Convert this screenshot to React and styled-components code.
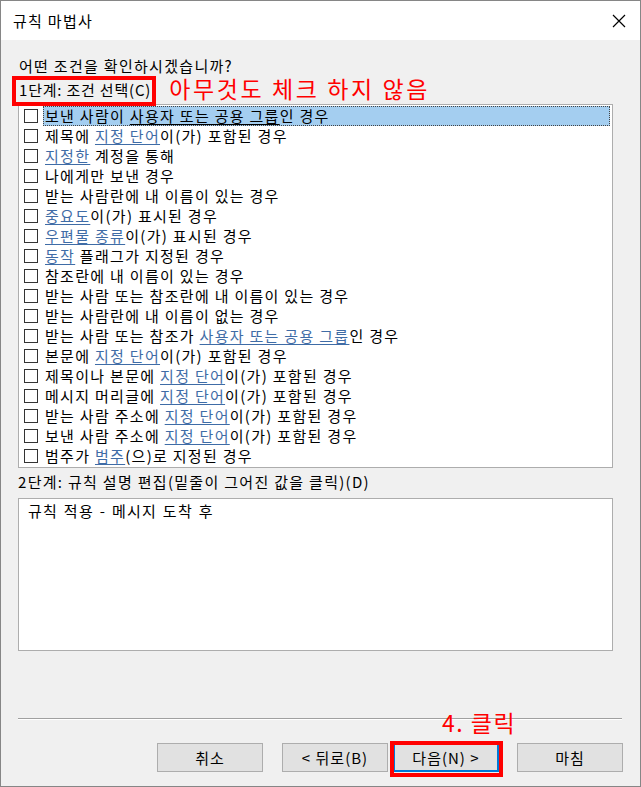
import React from 'react';
import styled, { createGlobalStyle } from 'styled-components';

const GlobalStyle = createGlobalStyle`
    html, body {
        margin: 0;
        padding: 0;
        background: #f0f0f0;
    }
    * {
        box-sizing: border-box;
    }
`;

const FONT = `"Noto Sans CJK KR", "Noto Sans", sans-serif`;

const Window = styled.div`
    width: 641px;
    height: 787px;
    border: 1px solid #868686;
    background: #f0f0f0;
    font-family: ${FONT};
    font-size: 15px;
    letter-spacing: 1.3px;
    color: #000;
    display: flex;
    flex-direction: column;
    overflow: hidden;
`;

const TitleBar = styled.div`
    height: 39px;
    flex: none;
    background: #fff;
    display: flex;
    align-items: center;
    justify-content: space-between;
    padding: 0 14px 0 12px;
    font-size: 15px;
`;

const Body = styled.div`
    padding: 16px 27px 0 17px;
    display: flex;
    flex-direction: column;
`;

const Line = styled.div`
    height: 20px;
    line-height: 20px;
    white-space: nowrap;
    padding-left: ${p => p.$indent || 0}px;
`;

const StepRow = styled.div`
    height: 28px;
    display: flex;
    align-items: flex-start;
    padding-top: 4px;
    padding-left: 1px;
    white-space: nowrap;
`;

const Boxed = styled.span`
    position: relative;
    display: inline-block;
    line-height: 20px;
    letter-spacing: 0.8px;

    &::after {
        content: '';
        position: absolute;
        top: -4px;
        bottom: -6px;
        left: -7px;
        right: -5px;
        border: 4px solid #ff0000;
    }
`;

const Note = styled.span`
    color: #ff0000;
    font-size: 23px;
    letter-spacing: 2.6px;
    line-height: 23px;
    margin-left: 18px;
    margin-top: -3px;
`;

const ListBox = styled.div`
    height: 364px;
    border: 1px solid #adadad;
    background: #fff;
    padding: 1px 2px;
`;

const Row = styled.div`
    height: 20px;
    display: flex;
    align-items: center;
    padding-left: 3px;
`;

const Check = styled.span`
    width: 14px;
    height: 14px;
    flex: none;
    border: 1px solid #333;
    background: #fff;
`;

const RowText = styled.span`
    flex: 1;
    height: 20px;
    line-height: 18px;
    margin-left: 5px;
    padding-left: 1px;
    white-space: nowrap;
    background: ${p => (p.$selected ? '#a4cef0' : 'transparent')};
    border: 1px ${p => (p.$selected ? 'dotted #444' : 'solid transparent')};
`;

const Link = styled.span`
    color: ${p => (p.$selected ? '#000' : '#3f6ca6')};
    text-decoration: underline;
    text-decoration-color: ${p => (p.$selected ? '#000' : '#3f6ca6')};
    text-underline-offset: 2px;
`;

const DescBox = styled.div`
    margin-top: 6px;
    height: 153px;
    border: 1px solid #adadad;
    background: #fff;
    padding: 2px 9px;
    line-height: 20px;
    word-spacing: 1px;
`;

const Separator = styled.div`
    margin: 67px 18px 0 17px;
    height: 2px;
    border-top: 1px solid #a0a0a0;
    border-bottom: 1px solid #fff;
`;

const ButtonBar = styled.div`
    margin-top: 23px;
    padding-right: 17px;
    display: flex;
    justify-content: flex-end;
`;

const Button = styled.div`
    position: relative;
    width: 106px;
    height: 29px;
    margin-left: ${p => p.$gap}px;
    background: #e1e1e1;
    border: ${p => (p.$default ? '2px solid #0078d7' : '1px solid #adadad')};
    display: flex;
    align-items: center;
    justify-content: center;
    font-size: 15px;
    letter-spacing: 1px;
    white-space: nowrap;

    ${p => p.$marked && `
        &::after {
            content: '';
            position: absolute;
            top: -4px;
            left: -5px;
            right: -6px;
            bottom: -7px;
            border: 4px solid #ff0000;
        }
    `}
`;

const ClickNote = styled.span`
    position: absolute;
    left: 47px;
    top: -35px;
    color: #ff0000;
    font-size: 23px;
    letter-spacing: 1.5px;
    line-height: 24px;
    white-space: nowrap;
`;

const CONDITIONS = [
    '보낸 사람이 [사용자 또는 공용 그룹]인 경우',
    '제목에 [지정 단어]이(가) 포함된 경우',
    '[지정한] 계정을 통해',
    '나에게만 보낸 경우',
    '받는 사람란에 내 이름이 있는 경우',
    '[중요도]이(가) 표시된 경우',
    '[우편물 종류]이(가) 표시된 경우',
    '[동작] 플래그가 지정된 경우',
    '참조란에 내 이름이 있는 경우',
    '받는 사람 또는 참조란에 내 이름이 있는 경우',
    '받는 사람란에 내 이름이 없는 경우',
    '받는 사람 또는 참조가 [사용자 또는 공용 그룹]인 경우',
    '본문에 [지정 단어]이(가) 포함된 경우',
    '제목이나 본문에 [지정 단어]이(가) 포함된 경우',
    '메시지 머리글에 [지정 단어]이(가) 포함된 경우',
    '받는 사람 주소에 [지정 단어]이(가) 포함된 경우',
    '보낸 사람 주소에 [지정 단어]이(가) 포함된 경우',
    '범주가 [범주](으)로 지정된 경우'
];

const renderText = (text, selected) =>
    text.split(/(\[[^\]]+\])/).filter(Boolean).map((part, i) =>
        part.startsWith('[')
            ? <Link key={i} $selected={selected}>{part.slice(1, -1)}</Link>
            : <React.Fragment key={i}>{part}</React.Fragment>
    );

const CloseIcon = () => (
    <svg width="14" height="14" viewBox="0 0 14 14">
        <path d="M1 1L13 13M13 1L1 13" stroke="#000" strokeWidth="1.2" fill="none" />
    </svg>
);

const App = () => {
    return (
        <>
            <GlobalStyle />
            <Window>
                <TitleBar>
                    <span>규칙 마법사</span>
                    <CloseIcon />
                </TitleBar>
                <Body>
                    <Line $indent={1}>어떤 조건을 확인하시겠습니까?</Line>
                    <StepRow>
                        <Boxed>1단계: 조건 선택(C)</Boxed>
                        <Note>아무것도 체크 하지 않음</Note>
                    </StepRow>
                    <ListBox>
                        {CONDITIONS.map((c, i) => (
                            <Row key={i}>
                                <Check />
                                <RowText $selected={i === 0}>{renderText(c, i === 0)}</RowText>
                            </Row>
                        ))}
                    </ListBox>
                    <Line style={{ marginTop: 4 }}>2단계: 규칙 설명 편집(밑줄이 그어진 값을 클릭)(D)</Line>
                    <DescBox>규칙 적용 - 메시지 도착 후</DescBox>
                </Body>
                <Separator />
                <ButtonBar>
                    <Button $gap={0}>취소</Button>
                    <Button $gap={19}>&lt; 뒤로(B)</Button>
                    <Button $gap={5} $default $marked>
                        다음(N) &gt;
                        <ClickNote>4. 클릭</ClickNote>
                    </Button>
                    <Button $gap={18}>마침</Button>
                </ButtonBar>
            </Window>
        </>
    );
};

export default App;
